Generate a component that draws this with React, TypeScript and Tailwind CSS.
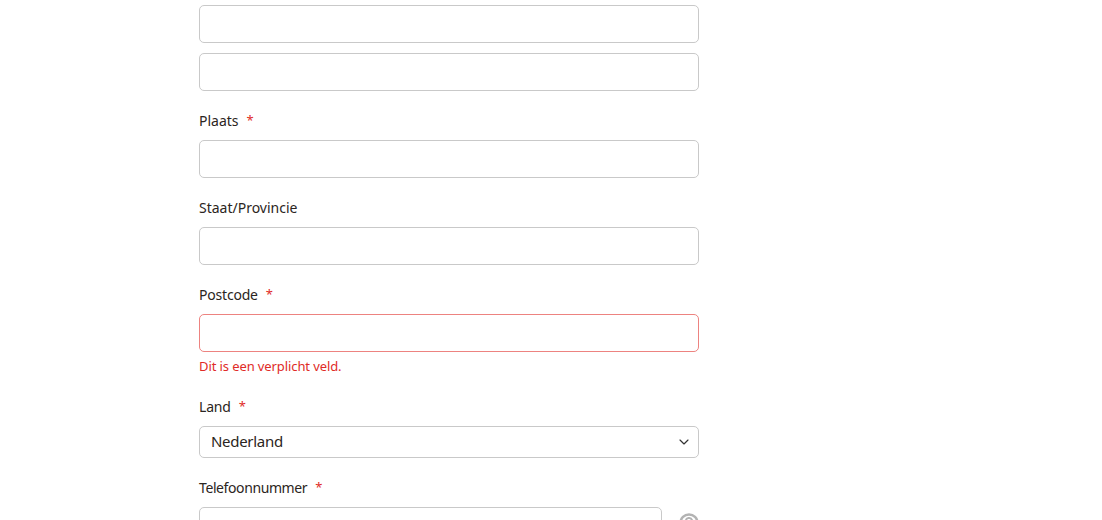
import React from 'react';
import { ChevronDown } from 'lucide-react';

const inputClass = 'block h-[38px] w-full rounded-[5px] border border-[#c9c9c9] bg-white';

const Label: React.FC<{ text: string; required?: boolean; className?: string }> = ({ text, required, className }) => (
  <div className="flex h-[19px] items-center text-[14px] leading-[19px] text-[#2b2521]">
    <span className={className}>{text}</span>
    {required && <span className="ml-[8px] text-[13px] text-[#e02b27]">*</span>}
  </div>
);

const App: React.FC = () => {
  return (
    <div className="h-[520px] overflow-hidden bg-white pl-[199px] pt-[5px] font-['Noto_Sans','Liberation_Sans',sans-serif]">
      <div className="w-[500px]">
        <input className={inputClass} />
        <input className={`${inputClass} mt-[10px]`} />

        <div className="mt-[20px]">
          <Label text="Plaats" required />
          <input className={`${inputClass} mt-[10px]`} />
        </div>

        <div className="mt-[20px]">
          <Label text="Staat/Provincie" />
          <input className={`${inputClass} mt-[10px]`} />
        </div>

        <div className="mt-[20px]">
          <Label text="Postcode" required className="tracking-[-0.2px]" />
          <input className="mt-[10px] block h-[38px] w-full rounded-[5px] border border-[#ed8380] bg-white" />
          <div className="mt-[6px] h-[17px] text-[13px] leading-[17px] tracking-[-0.1px] text-[#e02b27]">Dit is een verplicht veld.</div>
        </div>

        <div className="mt-[22px]">
          <Label text="Land" required className="tracking-[-0.2px]" />
          <div className="mt-[10px] flex h-[32px] w-full items-center justify-between rounded-[5px] border border-[#c9c9c9] bg-white pb-[1px] pl-[11px] pr-[6px] text-[15px] tracking-[-0.3px] text-[#2b2521]">
            <span>Nederland</span>
            <ChevronDown size={16} strokeWidth={1.75} className="text-[#333333]" />
          </div>
        </div>

        <div className="mt-[20px]">
          <Label text="Telefoonnummer" required className="tracking-[-0.4px]" />
          <div className="mt-[10px] flex items-start">
            <input className="block h-[38px] w-[463px] rounded-[5px] border border-[#c9c9c9] bg-white" />
            <svg width="20" height="20" viewBox="0 0 20 20" fill="none" stroke="#b3b3b3" className="ml-[17px] mt-[6px] shrink-0">
              <circle cx="10" cy="10" r="8.5" strokeWidth="2.5" />
              <path d="M6.8 8.2a3.2 3.2 0 1 1 4.7 2.8c-1 .5-1.5 1-1.5 2.2" strokeWidth="2" />
            </svg>
          </div>
        </div>
      </div>
    </div>
  );
};

export default App;
